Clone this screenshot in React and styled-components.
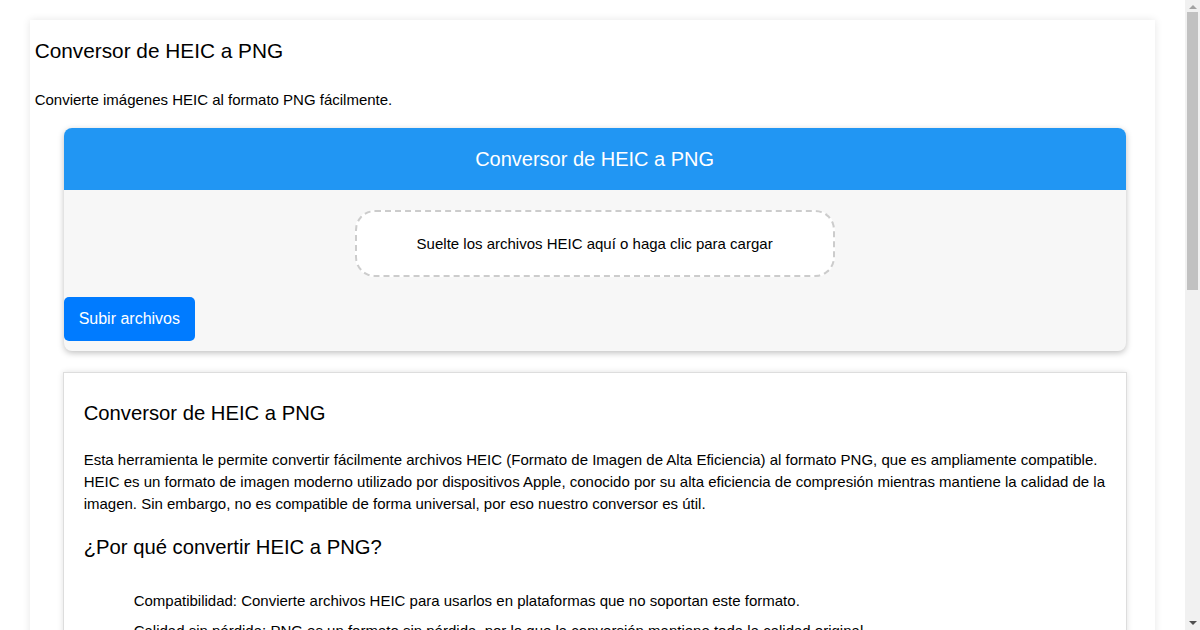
import React from "react";
import styled, { createGlobalStyle } from "styled-components";

const Global = createGlobalStyle`
  html, body { margin: 0; padding: 0; background: #fff; }
  body { font-family: "Liberation Sans", Arial, sans-serif; color: #000; }
`;

const Viewport = styled.div`
  margin-right: 15px;
  padding: 20px 0 40px;
`;

const Page = styled.div`
  width: 95%;
  margin: 0 auto;
  padding: 5px 5px 30px;
  box-sizing: border-box;
  background: #fff;
  box-shadow: 0 0 8px rgba(0, 0, 0, 0.1);
`;

const Title = styled.h1`
  font-size: 20.8px;
  font-weight: normal;
  line-height: 30px;
  margin: 11px 0 0;
`;

const Lead = styled.p`
  font-size: 15px;
  line-height: 22px;
  margin: 23px 0 0;
`;

const Card = styled.div`
  width: 1062px;
  margin: 17px 0 0 29px;
  background: #f7f7f7;
  border-radius: 8px;
  overflow: hidden;
  box-shadow: 0 2px 6px rgba(0, 0, 0, 0.25);
`;

const CardHeader = styled.div`
  background: #2196f3;
  color: #fff;
  text-align: center;
  font-size: 20px;
  line-height: 30px;
  padding: 16px 0;
`;

const CardBody = styled.div`
  padding: 20px 0 10px;
  display: flex;
  flex-direction: column;
  align-items: flex-start;
`;

const DropZone = styled.div`
  align-self: center;
  width: 480px;
  height: 67px;
  box-sizing: border-box;
  border: 2px dashed #ccc;
  border-radius: 20px;
  background: #fff;
  display: flex;
  align-items: center;
  justify-content: center;
  font-size: 15px;
  margin-bottom: 20px;
`;

const Button = styled.button`
  font-family: inherit;
  font-size: 16px;
  height: 44px;
  padding: 0 15px;
  border: none;
  border-radius: 5px;
  background: #007bff;
  color: #fff;
  cursor: pointer;
`;

const Section = styled.div`
  width: 1064px;
  box-sizing: border-box;
  margin: 21px 0 0 28px;
  padding: 20px;
  border: 1px solid #ddd;
  background: #fff;
  box-shadow: 0 0 6px rgba(0, 0, 0, 0.12);
`;

const SectionTitle = styled.h2`
  font-size: 20.25px;
  font-weight: normal;
  line-height: 30px;
  margin: ${(p) => p.$mt || 0}px 0 0;
`;

const Text = styled.p`
  font-size: 15px;
  line-height: 22px;
  margin: 21px 0 0;
`;

const List = styled.ul`
  list-style: none;
  margin: 28px 0 0;
  padding: 0 0 0 50px;
`;

const Item = styled.li`
  font-size: 15px;
  line-height: 22px;
  & + & { margin-top: 8px; }
`;

const ScrollBar = styled.div`
  position: fixed;
  top: 0;
  right: 0;
  width: 15px;
  height: 100vh;
  background: #f1f1f1;
  display: flex;
  flex-direction: column;
  align-items: center;
`;

const Arrow = styled.div`
  width: 0;
  height: 0;
  margin: ${(p) => (p.$down ? "auto 0 5px" : "5px 0 0")};
  border-left: 4px solid transparent;
  border-right: 4px solid transparent;
  ${(p) =>
    p.$down
      ? "border-top: 4px solid #505050;"
      : "border-bottom: 4px solid #a3a3a3;"}
`;

const Thumb = styled.div`
  width: 11px;
  height: 278px;
  margin-top: 3px;
  background: #c1c1c1;
`;

export default function App() {
  return (
    <>
      <Global />
      <Viewport>
        <Page>
          <Title>Conversor de HEIC a PNG</Title>
          <Lead>Convierte imágenes HEIC al formato PNG fácilmente.</Lead>
          <Card>
            <CardHeader>Conversor de HEIC a PNG</CardHeader>
            <CardBody>
              <DropZone>Suelte los archivos HEIC aquí o haga clic para cargar</DropZone>
              <Button>Subir archivos</Button>
            </CardBody>
          </Card>
          <Section>
            <SectionTitle $mt={5}>Conversor de HEIC a PNG</SectionTitle>
            <Text>
              Esta herramienta le permite convertir fácilmente archivos HEIC (Formato de Imagen de Alta Eficiencia) al formato PNG, que es ampliamente compatible. HEIC es un formato de imagen moderno utilizado por dispositivos Apple, conocido por su alta eficiencia de compresión mientras mantiene la calidad de la imagen. Sin embargo, no es compatible de forma universal, por eso nuestro conversor es útil.
            </Text>
            <SectionTitle $mt={17}>¿Por qué convertir HEIC a PNG?</SectionTitle>
            <List>
              <Item>Compatibilidad: Convierte archivos HEIC para usarlos en plataformas que no soportan este formato.</Item>
              <Item>Calidad sin pérdida: PNG es un formato sin pérdida, por lo que la conversión mantiene toda la calidad original.</Item>
              <Item>Transparencia: PNG admite fondos transparentes, ideal para diseño gráfico y web.</Item>
              <Item>Facilidad de uso: Convierta sus imágenes en segundos, sin necesidad de instalar software.</Item>
            </List>
            <SectionTitle $mt={17}>¿Cómo usar el conversor?</SectionTitle>
            <List>
              <Item>Haga clic en el área de carga o arrastre sus archivos HEIC.</Item>
              <Item>Espere a que se complete la conversión.</Item>
              <Item>Descargue sus imágenes PNG convertidas.</Item>
            </List>
            <Text>
              Todas las conversiones se realizan directamente en su navegador, por lo que sus archivos nunca salen de su dispositivo.
            </Text>
          </Section>
        </Page>
      </Viewport>
      <ScrollBar>
        <Arrow />
        <Thumb />
        <Arrow $down />
      </ScrollBar>
    </>
  );
}
